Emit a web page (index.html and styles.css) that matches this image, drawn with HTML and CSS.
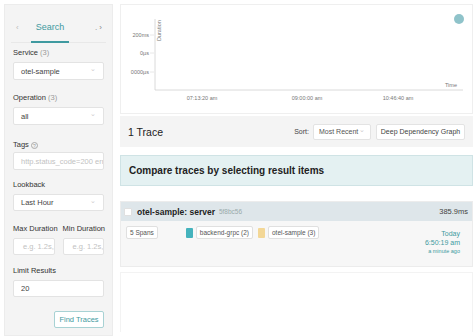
FILE: index.html
```html
<!DOCTYPE html>
<html>
<head>
<meta charset="utf-8">
<link rel="stylesheet" href="styles.css">
</head>
<body>
<div class="page">
  <aside class="side">
    <div class="tabs">
      <span class="arrow">‹</span>
      <span class="tab active">Search</span>
      <span class="arrow right">. ›</span>
    </div>
    <div class="field">
      <div class="label">Service <span class="muted">(3)</span></div>
      <div class="select"><span>otel-sample</span><span class="chev">⌄</span></div>
    </div>
    <div class="field wide">
      <div class="label">Operation <span class="muted">(3)</span></div>
      <div class="select"><span>all</span><span class="chev">⌄</span></div>
    </div>
    <div class="field tight">
      <div class="label short">Tags <span class="q">?</span></div>
      <div class="input ph">http.status_code=200 erro</div>
    </div>
    <div class="field">
      <div class="label">Lookback</div>
      <div class="select sm"><span>Last Hour</span><span class="chev">⌄</span></div>
    </div>
    <div class="field row2">
      <div class="half">
        <div class="label">Max Duration</div>
        <div class="input sm ph">e.g. 1.2s, </div>
      </div>
      <div class="half">
        <div class="label">Min Duration</div>
        <div class="input sm ph">e.g. 1.2s, </div>
      </div>
    </div>
    <div class="field">
      <div class="label">Limit Results</div>
      <div class="input sm">20</div>
    </div>
    <div class="btnrow"><button class="find">Find Traces</button></div>
  </aside>
  <main class="main">
    <div class="chart">
      <svg width="350" height="108" viewBox="0 0 350 108">
        <g font-family="Liberation Sans, Arial, sans-serif" font-size="5.5" fill="#777">
          <text x="27" y="32" text-anchor="end">200ms</text>
          <text x="27" y="50" text-anchor="end">0µs</text>
          <text x="27" y="69" text-anchor="end">0000µs</text>
          <text transform="translate(39,36) rotate(-90)">Duration</text>
          <text x="80" y="95" text-anchor="middle">07:13:20 am</text>
          <text x="185" y="95" text-anchor="middle">09:00:00 am</text>
          <text x="276" y="95" text-anchor="middle">10:46:40 am</text>
          <text x="335" y="82" text-anchor="end">Time</text>
        </g>
        <g stroke="#e2e2e2" stroke-width="0.8">
          <line x1="28" y1="30" x2="32" y2="30"/>
          <line x1="28" y1="48" x2="32" y2="48"/>
          <line x1="28" y1="67" x2="32" y2="67"/>
        </g>
        <line x1="33" y1="14" x2="33" y2="85" stroke="#d0d0d0" stroke-width="0.8"/>
        <line x1="33" y1="85" x2="341" y2="85" stroke="#d0d0d0" stroke-width="0.8"/>
        <circle cx="337" cy="14" r="5" fill="#8fc3ca"/>
      </svg>
    </div>
    <div class="bar">
      <div class="count">1 Trace</div>
      <div class="sort">
        <span class="sortlbl">Sort:</span>
        <div class="sel">Most Recent <span class="chev">⌄</span></div>
        <button class="ddg">Deep Dependency Graph</button>
      </div>
    </div>
    <div class="compare">Compare traces by selecting result items</div>
    <div class="result">
      <div class="rhead">
        <span class="cb"></span>
        <span class="rname">otel-sample: server</span>
        <span class="rid">5f8bc56</span>
        <span class="rdur">385.9ms</span>
      </div>
      <div class="rbody">
        <div class="tags">
          <span class="tag">5 Spans</span>
          <span class="svc"><i class="sw teal"></i><span class="tag">backend-grpc (2)</span></span>
          <span class="svc"><i class="sw yel"></i><span class="tag">otel-sample (3)</span></span>
        </div>
        <div class="when">
          <div>Today</div>
          <div>6:50:19 am</div>
          <div class="ago">a minute ago</div>
        </div>
      </div>
    </div>
    <div class="spacer"></div>
  </main>
</div>
</body>
</html>
```
FILE: styles.css
```css
* { box-sizing: border-box; }
html, body { margin: 0; padding: 0; background: #fff; }
body { font-family: "Liberation Sans", Arial, sans-serif; color: #333; font-size: 8px; }
.page { display: flex; gap: 7px; padding: 4px 3px 0 4px; height: 336px; }
.side { width: 109px; flex: none; background: #f4f4f4; border: 1px solid #ececec; padding: 0 8px; display: flex; flex-direction: column; }
.tabs { display: flex; align-items: center; height: 38px; padding-top: 8px; margin: 0 -2px 5px; border-bottom: 1px solid #e8e8e8; }
.arrow { color: #bbb; font-size: 8px; width: 18px; padding-left: 5px; }
.arrow.right { text-align: right; color: #888; margin-left: auto; width: 20px; padding-right: 4px; }
.tab { color: #3f9aa0; font-size: 9px; padding: 8px 0 9px; border-bottom: 2px solid #3f9aa0; margin-left: 2px; width: 38px; text-align: center; align-self: flex-end; margin-bottom: -1px; }
.field { margin-bottom: 13px; }
.field.wide { margin-bottom: 15px; }
.field.tight { margin-bottom: 10px; }
.label { font-size: 7.5px; line-height: 9px; color: #333; margin-bottom: 5px; height: 9px; white-space: nowrap; }
.label.short { margin-bottom: 3px; }
.muted { color: #999; }
.q { display: inline-block; width: 7px; height: 7px; border: 0.8px solid #aaa; border-radius: 50%; font-size: 5px; line-height: 6px; text-align: center; color: #999; vertical-align: -1px; }
.select, .input { height: 18px; background: #fff; border: 1px solid #e3e3e3; border-radius: 2px; padding: 0 7px; display: flex; align-items: center; justify-content: space-between; font-size: 7.5px; color: #444; white-space: nowrap; overflow: hidden; }
.sm { height: 17px; }
.chev { color: #ccc; font-size: 7px; margin-top: -4px; }
.ph { color: #c2c2c2; }
.row2 { display: flex; gap: 8px; margin-bottom: 11px; }
.half { flex: 1; min-width: 0; }
.half .input { padding-left: 9px; }
.btnrow { display: flex; justify-content: flex-end; margin-top: 1px; }
.find { height: 17px; width: 50px; background: #fff; border: 1px solid #a8d2d4; border-radius: 2px; color: #3f9aa0; font-size: 7.5px; font-family: inherit; padding: 0; }
.main { flex: 1; display: flex; flex-direction: column; }
.chart { height: 110px; border: 1px solid #efefef; background: #fff; }
.chart svg { display: block; margin-left: 1px; }
.bar { margin-top: 2px; height: 31px; background: #f4f4f4; display: flex; align-items: center; justify-content: space-between; padding: 0 8px; }
.count { font-size: 10.5px; color: #222; }
.sort { display: flex; align-items: center; gap: 4px; }
.sortlbl { font-size: 7px; color: #444; }
.sel { background: #fff; border: 1px solid #e3e3e3; border-radius: 2px; height: 16px; width: 58px; display: flex; align-items: center; padding: 0 5px; font-size: 7px; color: #555; justify-content: space-between; }
.ddg { background: #fff; border: 1px solid #e3e3e3; border-radius: 2px; height: 16px; width: 89px; font-size: 7px; color: #444; font-family: inherit; padding: 0; margin-left: 1px; }
.compare { margin-top: 8px; height: 31px; background: #e4f1f2; border: 1px solid #cfe3e5; display: flex; align-items: center; padding-left: 8px; font-size: 10px; font-weight: bold; color: #222; }
.result { margin-top: 15px; border: 1px solid #ececec; }
.rhead { height: 19px; background: #dee6ea; display: flex; align-items: center; padding: 0 4px 0 3px; }
.cb { width: 8px; height: 8px; background: #fff; border: 1px solid #e0e0e0; border-radius: 1px; margin-right: 5px; }
.rname { font-weight: bold; font-size: 8.5px; color: #222; }
.rid { font-size: 6.5px; color: #9aa; margin-left: 4px; }
.rdur { margin-left: auto; font-size: 7.5px; color: #444; }
.rbody { height: 45px; background: #f7f7f7; display: flex; justify-content: space-between; padding: 5px 12px 0 5px; }
.tags { display: flex; align-items: flex-start; }
.tag { display: inline-block; border: 1px solid #e0e0e0; background: #fff; border-radius: 2px; font-size: 6.5px; color: #555; padding: 2px 3px; line-height: 7px; }
.svc { display: flex; align-items: center; margin-left: 28px; }
.svc + .svc { margin-left: 5px; }
.sw { display: block; width: 7px; height: 10px; border-radius: 1px; margin-right: 3px; }
.teal { background: #45b3bd; }
.yel { background: #f3d796; }
.when { text-align: right; color: #3f9aa0; font-size: 7px; line-height: 9px; padding-top: 3px; }
.ago { font-size: 5.5px; }
.spacer { margin-top: 5px; height: 60px; border: 1px solid #f3f3f3; border-bottom: none; }
```
